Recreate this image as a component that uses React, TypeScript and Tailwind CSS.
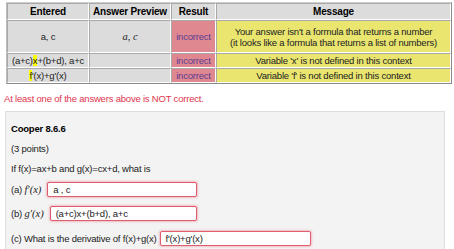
import React from "react";

const cell = "border border-t-[#a8a8a8] border-l-[#a8a8a8] border-r-white border-b-white text-center px-0 whitespace-nowrap overflow-visible";
const gray = "bg-[#dcdcdc]";
const bad = "bg-[#e0888f] text-[#5a3d93]";
const msg = "bg-[#e9e56f]";

function Mi({ children }: { children: React.ReactNode }) {
  return <span style={{ fontFamily: '"Liberation Serif", serif' }} className="italic text-[10.5px] tracking-normal">{children}</span>;
}

function Field({ value, w }: { value: string; w: string }) {
  return (
    <div className={`${w} h-[15px] shrink-0 bg-white border border-[#df5d6c] rounded-[2px] shadow-[0_0_2px_1px_rgba(224,93,108,0.35)] flex items-center px-[5px] text-[9.5px] text-[#222]`}>
      {value}
    </div>
  );
}

export default function App() {
  return (
    <div className="w-[454px] h-[249px] overflow-hidden bg-white text-[9.5px] tracking-[-0.2px] text-[#222]" style={{ fontFamily: '"Liberation Sans", Arial, sans-serif' }}>
      <div className="pt-[2px] pl-[6px]">
        <table className="table-fixed w-[446px] border-separate border-spacing-0 border border-t-[#cfcfcf] border-l-[#bdbdbd] border-r-[#8a8a8a] border-b-[#8a8a8a] leading-[11px]">
          <colgroup>
            <col className="w-[82px]" />
            <col className="w-[82px]" />
            <col className="w-[45px]" />
            <col />
          </colgroup>
          <thead>
            <tr className="h-[17px]">
              <th className={`${cell} ${gray} font-bold text-[10px] text-black`}>Entered</th>
              <th className={`${cell} ${gray} font-bold text-[10px] text-black`}>Answer Preview</th>
              <th className={`${cell} ${gray} font-bold text-[10px] text-black`}>Result</th>
              <th className={`${cell} ${gray} font-bold text-[10px] text-black`}>Message</th>
            </tr>
          </thead>
          <tbody>
            <tr className="h-[33px]">
              <td className={`${cell} ${gray}`}>a, c</td>
              <td className={`${cell} ${gray}`}><Mi>a, c</Mi></td>
              <td className={`${cell} ${bad}`}>incorrect</td>
              <td className={`${cell} ${msg}`}>Your answer isn't a formula that returns a number<br />(it looks like a formula that returns a list of numbers)</td>
            </tr>
            <tr className="h-[15px]">
              <td className={`${cell} ${gray}`}>(a+c)<span className="bg-[#ffff00]">x</span>+(b+d), a+c</td>
              <td className={`${cell} ${gray}`}></td>
              <td className={`${cell} ${bad}`}>incorrect</td>
              <td className={`${cell} ${msg}`}>Variable 'x' is not defined in this context</td>
            </tr>
            <tr className="h-[15px]">
              <td className={`${cell} ${gray}`}><span className="bg-[#ffff00]">f</span>'(x)+g'(x)</td>
              <td className={`${cell} ${gray}`}></td>
              <td className={`${cell} ${bad}`}>incorrect</td>
              <td className={`${cell} ${msg}`}>Variable 'f' is not defined in this context</td>
            </tr>
          </tbody>
        </table>
      </div>
      <div className="pl-[4px] mt-[9px] text-[#e0354d] leading-[12px]">At least one of the answers above is NOT correct.</div>
      <div className="ml-[5px] mt-[6px] w-[440px] h-[160px] bg-[#f3f3f3] border border-[#dedede] pl-[5px] pt-[11px] leading-[12px]">
        <div className="font-bold text-black">Cooper 8.6.6</div>
        <div className="mt-[8px]">(3 points)</div>
        <div className="mt-[8px]">If f(x)=ax+b and g(x)=cx+d, what is</div>
        <div className="mt-[7px] flex items-center gap-[6px]">
          <span className="whitespace-nowrap">(a) <Mi>f′(x)</Mi></span>
          <Field value="a , c" w="w-[150px]" />
        </div>
        <div className="mt-[9px] flex items-center gap-[6px]">
          <span className="whitespace-nowrap">(b) <Mi>g′(x)</Mi></span>
          <Field value="(a+c)x+(b+d), a+c" w="w-[147px]" />
        </div>
        <div className="mt-[10px] flex items-center gap-[3px]">
          <span className="whitespace-nowrap">(c) What is the derivative of f(x)+g(x)</span>
          <Field value="f'(x)+g'(x)" w="w-[151px]" />
        </div>
      </div>
    </div>
  );
}
